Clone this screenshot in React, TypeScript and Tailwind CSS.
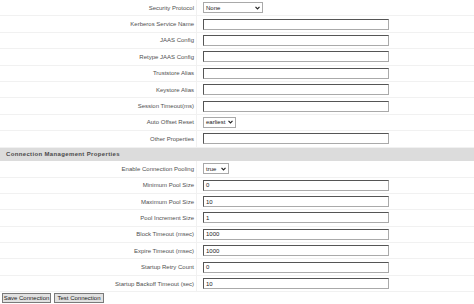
import React from 'react';

type Field = { label: string; kind: 'text' | 'select'; value?: string; width?: string };

const securityFields: Field[] = [
  { label: 'Security Protocol', kind: 'select', value: 'None', width: 'w-[60px]' },
  { label: 'Kerberos Service Name', kind: 'text' },
  { label: 'JAAS Config', kind: 'text' },
  { label: 'Retype JAAS Config', kind: 'text' },
  { label: 'Truststore Alias', kind: 'text' },
  { label: 'Keystore Alias', kind: 'text' },
  { label: 'Session Timeout(ms)', kind: 'text' },
  { label: 'Auto Offset Reset', kind: 'select', value: 'earliest', width: 'w-[33px]' },
  { label: 'Other Properties', kind: 'text' },
];

const poolFields: Field[] = [
  { label: 'Enable Connection Pooling', kind: 'select', value: 'true', width: 'w-[26px]' },
  { label: 'Minimum Pool Size', kind: 'text', value: '0' },
  { label: 'Maximum Pool Size', kind: 'text', value: '10' },
  { label: 'Pool Increment Size', kind: 'text', value: '1' },
  { label: 'Block Timeout (msec)', kind: 'text', value: '1000' },
  { label: 'Expire Timeout (msec)', kind: 'text', value: '1000' },
  { label: 'Startup Retry Count', kind: 'text', value: '0' },
  { label: 'Startup Backoff Timeout (sec)', kind: 'text', value: '10' },
];

function Chevron() {
  return (
    <svg width="5" height="4" viewBox="0 0 6 4" className="shrink-0">
      <path d="M0.6 0.6 L3 3 L5.4 0.6" fill="none" stroke="#222" strokeWidth="1.4" />
    </svg>
  );
}

function Row({ field }: { field: Field }) {
  return (
    <div className="flex h-[16.4px] border-b border-[#f1f1f1]">
      <div className="w-[197px] shrink-0 flex items-center justify-end pr-[2px] border-r border-[#f1f1f1] text-[#505050]">
        {field.label}
      </div>
      <div className="flex items-center pl-[6px]">
        {field.kind === 'select' ? (
          <div
            className={`${field.width} h-[11px] flex items-center justify-between pl-[2px] pr-[2px] border border-[#a9a9a9] bg-white text-[#222]`}
          >
            <span>{field.value}</span>
            <Chevron />
          </div>
        ) : (
          <div className="w-[186px] h-[11px] flex items-center pl-[2px] border-t-[1.5px] border-l-[1.5px] border-b border-r border-t-[#555] border-l-[#555] border-b-[#aaa] border-r-[#aaa] bg-white text-[#222]">
            {field.value ?? ''}
          </div>
        )}
      </div>
    </div>
  );
}

export default function App() {
  return (
    <div className="w-[474px] h-[304px] overflow-hidden bg-white text-[6px] leading-none [font-family:'Liberation_Sans',Arial,sans-serif]">
      {securityFields.map(f => (
        <Row key={f.label} field={f} />
      ))}
      <div className="h-[13.6px] bg-[#dcdcdc] flex items-center pl-[6px] font-bold text-[#4a4a4a] tracking-[0.35px]">
        Connection Management Properties
      </div>
      {poolFields.map(f => (
        <Row key={f.label} field={f} />
      ))}
      <div className="flex gap-[3px] pl-[2px] pt-[1px]">
        <button className="w-[49px] h-[10px] bg-[#e1e1e1] border border-[#7a7a7a] text-[#222] leading-none text-center">
          Save Connection
        </button>
        <button className="w-[50px] h-[10px] bg-[#e1e1e1] border border-[#7a7a7a] text-[#222] leading-none text-center">
          Test Connection
        </button>
      </div>
    </div>
  );
}
